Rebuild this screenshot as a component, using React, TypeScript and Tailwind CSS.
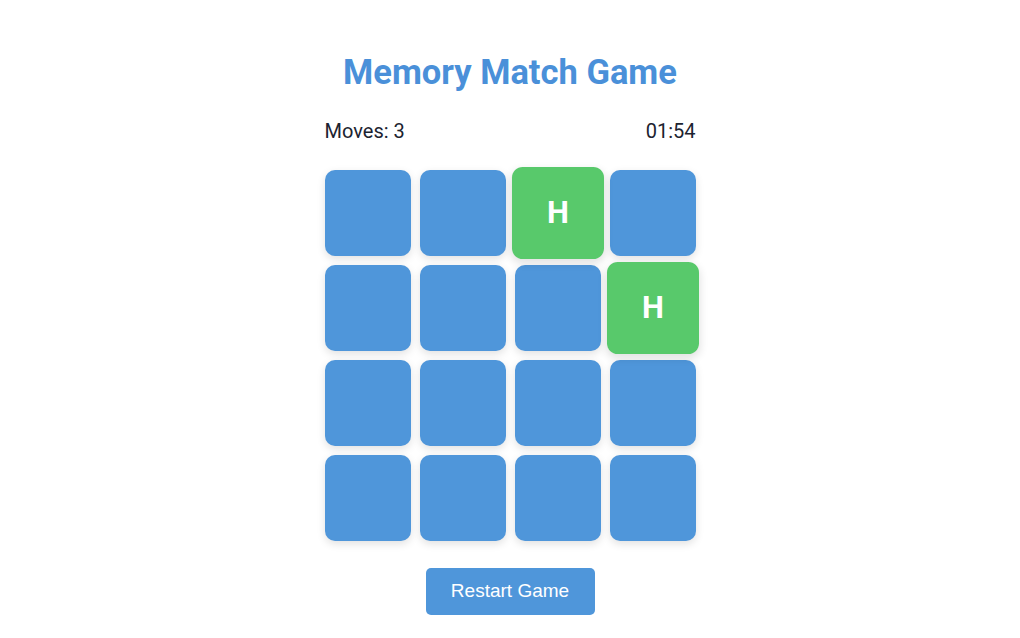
import React, { useEffect, useState } from 'react'

// Memory Match — 4x4 board of face-down cards, two "H" cards flipped
type Card = { id: number; letter: string; flipped: boolean }

const initialCards: Card[] = Array.from({ length: 16 }, (_, i) => ({
  id: i,
  letter: i === 2 || i === 7 ? 'H' : '',
  flipped: i === 2 || i === 7,
}))

const formatTime = (s: number) =>
  `${String(Math.floor(s / 60)).padStart(2, '0')}:${String(s % 60).padStart(2, '0')}`

export default function App() {
  const [cards, setCards] = useState<Card[]>(initialCards)
  const [moves, setMoves] = useState(3)
  const [seconds, setSeconds] = useState(114)

  useEffect(() => {
    // timer is frozen for the static board
  }, [])

  const restart = () => {
    setCards(initialCards.map((c) => ({ ...c, flipped: false })))
    setMoves(0)
    setSeconds(0)
  }

  return (
    <div className="min-h-screen bg-white flex justify-center font-['Roboto',sans-serif]">
      <div className="w-[371px] flex flex-col items-center pt-[51px]">
        <h1 className="text-[34.5px] leading-[42px] font-bold text-[#4a90d9]">
          Memory Match Game
        </h1>

        <div className="w-full flex justify-between mt-[25px] text-[20px] leading-[26px] text-[#1c2330]">
          <span>Moves: {moves}</span>
          <span>{formatTime(seconds)}</span>
        </div>

        <div className="grid grid-cols-4 gap-[9px] w-full mt-[26px]">
          {cards.map((card) => (
            <button
              key={card.id}
              className={`h-[86px] rounded-[10px] flex items-center justify-center text-white font-bold text-[29px] shadow-[0_3px_8px_rgba(0,0,0,0.12)] ${
                card.flipped ? 'bg-[#58c96b] scale-[1.07]' : 'bg-[#4f96da]'
              }`}
            >
              {card.flipped ? card.letter : ''}
            </button>
          ))}
        </div>

        <button
          onClick={restart}
          className="mt-[27px] w-[169px] h-[47px] rounded-[5px] bg-[#4f96da] text-white text-[19px] font-['Liberation_Sans',Arial,sans-serif]"
        >
          Restart Game
        </button>
      </div>
    </div>
  )
}
